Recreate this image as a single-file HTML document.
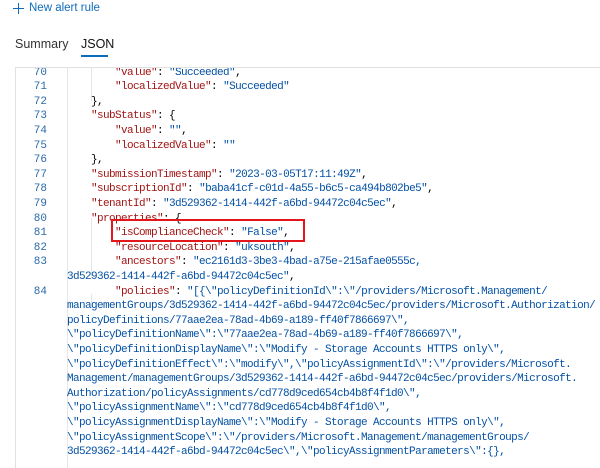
<!DOCTYPE html>
<html><head><meta charset="utf-8"><style>
body{margin:0;width:600px;height:460px;overflow:hidden;background:#fff;font-family:"Liberation Sans",sans-serif;position:relative}
.a{position:absolute}
.code{position:absolute;left:15px;top:67px;width:600px;height:400px;border-left:1px solid #e1e1e1;border-top:1px solid #e1e1e1;overflow:hidden}
.ln,.l{position:absolute;font-family:"Liberation Mono",monospace;font-size:11px;letter-spacing:-0.6px;line-height:14.6px;white-space:pre;height:14.6px}
.ln{left:0;width:31px;text-align:right;color:#2b6aa8;letter-spacing:0}
.l{left:51px;color:#000}
.k{color:#a31515}.s{color:#0451a5}
.g{position:absolute;width:1px;background:#e6e6e6}
</style></head><body>
<div class="a" style="left:13px;top:3px;width:11px;height:11px">
<div class="a" style="left:5px;top:0;width:1.3px;height:11px;background:#0f6cbd"></div>
<div class="a" style="left:0;top:5px;width:11px;height:1.3px;background:#0f6cbd"></div></div>
<div class="a" style="left:29px;top:2px;font-size:11.5px;color:#0f6cbd">New alert rule</div>
<div class="a" style="left:15px;top:37px;font-size:12.5px;color:#333">Summary</div>
<div class="a" style="left:81px;top:37px;font-size:12.5px;color:#111">JSON</div>
<div class="a" style="left:81px;top:55px;width:27px;height:2px;background:#0f6cbd"></div>
<div class="code" style="padding-top:0">
<div style="position:absolute;left:0;top:1.5px;width:600px;height:400px">
<div class="g" style="left:51px;top:-2px;height:400px"></div>
<div class="g" style="left:75px;top:-2px;height:33px"></div>
<div class="g" style="left:75px;top:148px;height:60px"></div>
<div class="g" style="left:75px;top:224px;height:14px"></div>
<div class="ln" style="top:-4px">70</div><div class="l" style="top:-4px">        <span class="k">"value"</span>: <span class="s">"Succeeded"</span>,</div>
<div class="ln" style="top:10.6px">71</div><div class="l" style="top:10.6px">        <span class="k">"localizedValue"</span>: <span class="s">"Succeeded"</span></div>
<div class="ln" style="top:25.2px">72</div><div class="l" style="top:25.2px">    },</div>
<div class="ln" style="top:39.8px">73</div><div class="l" style="top:39.8px">    <span class="k">"subStatus"</span>: {</div>
<div class="ln" style="top:54.4px">74</div><div class="l" style="top:54.4px">        <span class="k">"value"</span>: <span class="s">""</span>,</div>
<div class="ln" style="top:69px">75</div><div class="l" style="top:69px">        <span class="k">"localizedValue"</span>: <span class="s">""</span></div>
<div class="ln" style="top:83.6px">76</div><div class="l" style="top:83.6px">    },</div>
<div class="ln" style="top:98.2px">77</div><div class="l" style="top:98.2px">    <span class="k">"submissionTimestamp"</span>: <span class="s">"2023-03-05T17:11:49Z"</span>,</div>
<div class="ln" style="top:112.8px">78</div><div class="l" style="top:112.8px">    <span class="k">"subscriptionId"</span>: <span class="s">"baba41cf-c01d-4a55-b6c5-ca494b802be5"</span>,</div>
<div class="ln" style="top:127.4px">79</div><div class="l" style="top:127.4px">    <span class="k">"tenantId"</span>: <span class="s">"3d529362-1414-442f-a6bd-94472c04c5ec"</span>,</div>
<div class="ln" style="top:142px">80</div><div class="l" style="top:142px">    <span class="k">"properties"</span>: {</div>
<div class="ln" style="top:156.6px">81</div><div class="l" style="top:156.6px">        <span class="k">"isComplianceCheck"</span>: <span class="s">"False"</span>,</div>
<div class="ln" style="top:171.2px">82</div><div class="l" style="top:171.2px">        <span class="k">"resourceLocation"</span>: <span class="s">"uksouth"</span>,</div>
<div class="ln" style="top:185.8px">83</div><div class="l" style="top:185.8px">        <span class="k">"ancestors"</span>: <span class="s">"ec2161d3-3be3-4bad-a75e-215afae0555c,</span></div>
<div class="l s" style="top:200.4px">3d529362-1414-442f-a6bd-94472c04c5ec"<span style="color:#000">,</span></div>
<div class="ln" style="top:215px">84</div><div class="l" style="top:215px">        <span class="k">"policies"</span>: <span class="s">"[{\"policyDefinitionId\":\"/providers/Microsoft.Management/</span></div>
<div class="l s" style="top:229.6px">managementGroups/3d529362-1414-442f-a6bd-94472c04c5ec/providers/Microsoft.Authorization/</div>
<div class="l s" style="top:244.2px">policyDefinitions/77aae2ea-78ad-4b69-a189-ff40f7866697\",</div>
<div class="l s" style="top:258.8px">\"policyDefinitionName\":\"77aae2ea-78ad-4b69-a189-ff40f7866697\",</div>
<div class="l s" style="top:273.4px">\"policyDefinitionDisplayName\":\"Modify - Storage Accounts HTTPS only\",</div>
<div class="l s" style="top:288px">\"policyDefinitionEffect\":\"modify\",\"policyAssignmentId\":\"/providers/Microsoft.</div>
<div class="l s" style="top:302.6px">Management/managementGroups/3d529362-1414-442f-a6bd-94472c04c5ec/providers/Microsoft.</div>
<div class="l s" style="top:317.2px">Authorization/policyAssignments/cd778d9ced654cb4b8f4f1d0\",</div>
<div class="l s" style="top:331.8px">\"policyAssignmentName\":\"cd778d9ced654cb4b8f4f1d0\",</div>
<div class="l s" style="top:346.4px">\"policyAssignmentDisplayName\":\"Modify - Storage Accounts HTTPS only\",</div>
<div class="l s" style="top:361px">\"policyAssignmentScope\":\"/providers/Microsoft.Management/managementGroups/</div>
<div class="l s" style="top:375.6px">3d529362-1414-442f-a6bd-94472c04c5ec\",\"policyAssignmentParameters\":{},</div>
</div>
</div>
<div class="a" style="left:111px;top:219px;width:190px;height:19px;border:2px solid #e3161c"></div>
</body></html>
